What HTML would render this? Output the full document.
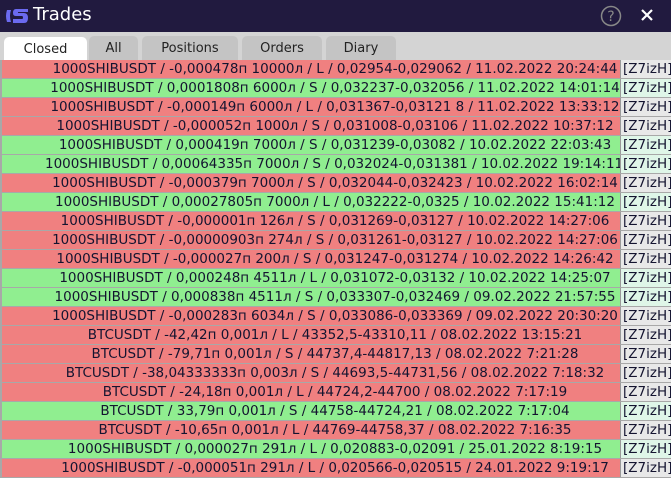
<!DOCTYPE html>
<html><head><meta charset="utf-8"><style>
*{margin:0;padding:0;box-sizing:border-box}
body{width:671px;height:478px;overflow:hidden;background:#d4d4d4;font-family:"DejaVu Sans","Liberation Sans",sans-serif}
.title{height:32px;background:#211a3f;color:#fff;position:relative}
.title .t{position:absolute;left:33px;top:4px;font-size:18px}
.tabs{height:28px;position:relative}
.tab{position:absolute;top:4px;height:24px;background:#c4c4c4;border-radius:5px 5px 0 0;font-size:13px;color:#222;text-align:center;line-height:25px}
.tab.a{background:#fff;top:5px;height:24px}
.rows{position:absolute;top:60px;left:0;width:671px;border-left:2px solid #a8a8a8}
.r{height:19px;display:flex;border-bottom:1px solid #a8a8a8;font-size:13.5px;line-height:19px;color:#141430;white-space:nowrap}
.m{width:618px;overflow:hidden;text-align:center;padding-left:48px}
.z{width:51px;padding-left:2px;border-left:1px solid #9a9a9a}
.R .m{background:#f08080}.R .z{background:#e8e8e8}
.G .m{background:#90ee90}.G .z{background:#dff6e8}
.m.L{text-align:left;padding-left:43px}
</style></head><body>
<div class="title">
<svg style="position:absolute;left:5px;top:7px" width="24" height="18" viewBox="0 0 24 18"><path d="M2 3 Q0 9 2 15 L6 15 Q4 9 6 3Z" fill="#6b6af0"/><path d="M23 2 L11 2 Q8 2 8 6 Q8 9 11 9 L17 9 Q18 9 18 11 Q18 12 17 12 L8 12 L8 16 L19 16 Q23 16 23 11 Q23 6 19 6 L13 6 L13 5 L23 5Z" fill="#6b6af0"/></svg>
<span class="t">Trades</span>
<svg style="position:absolute;left:600px;top:5px" width="22" height="22" viewBox="0 0 22 22"><circle cx="11" cy="11" r="9.5" fill="none" stroke="#888" stroke-width="1.5"/><text x="11" y="16" font-size="14" text-anchor="middle" fill="#888" font-family="DejaVu Sans">?</text></svg>
<svg style="position:absolute;left:640px;top:8px" width="14" height="14" viewBox="0 0 14 14"><path d="M2 2L12 12M12 2L2 12" stroke="#fff" stroke-width="2.2"/></svg>
</div>
<div class="tabs">
<div class="tab a" style="left:4px;width:83px">Closed</div>
<div class="tab" style="left:89px;width:49px">All</div>
<div class="tab" style="left:142px;width:96px">Positions</div>
<div class="tab" style="left:242px;width:80px">Orders</div>
<div class="tab" style="left:326px;width:70px">Diary</div>
</div>
<div class="rows">
<div class="r R"><div class="m">1000SHIBUSDT / -0,000478п 10000л / L / 0,02954-0,029062 / 11.02.2022 20:24:44</div><div class="z">[Z7izH]</div></div>
<div class="r G"><div class="m">1000SHIBUSDT / 0,0001808п 6000л / S / 0,032237-0,032056 / 11.02.2022 14:01:14</div><div class="z">[Z7izH]</div></div>
<div class="r R"><div class="m">1000SHIBUSDT / -0,000149п 6000л / L / 0,031367-0,03121 8 / 11.02.2022 13:33:12</div><div class="z">[Z7izH]</div></div>
<div class="r R"><div class="m">1000SHIBUSDT / -0,000052п 1000л / S / 0,031008-0,03106 / 11.02.2022 10:37:12</div><div class="z">[Z7izH]</div></div>
<div class="r G"><div class="m">1000SHIBUSDT / 0,000419п 7000л / S / 0,031239-0,03082 / 10.02.2022 22:03:43</div><div class="z">[Z7izH]</div></div>
<div class="r G"><div class="m L">1000SHIBUSDT / 0,00064335п 7000л / S / 0,032024-0,031381 / 10.02.2022 19:14:11</div><div class="z">[Z7izH]</div></div>
<div class="r R"><div class="m">1000SHIBUSDT / -0,000379п 7000л / S / 0,032044-0,032423 / 10.02.2022 16:02:14</div><div class="z">[Z7izH]</div></div>
<div class="r G"><div class="m">1000SHIBUSDT / 0,00027805п 7000л / L / 0,032222-0,0325 / 10.02.2022 15:41:12</div><div class="z">[Z7izH]</div></div>
<div class="r R"><div class="m">1000SHIBUSDT / -0,000001п 126л / S / 0,031269-0,03127 / 10.02.2022 14:27:06</div><div class="z">[Z7izH]</div></div>
<div class="r R"><div class="m">1000SHIBUSDT / -0,00000903п 274л / S / 0,031261-0,03127 / 10.02.2022 14:27:06</div><div class="z">[Z7izH]</div></div>
<div class="r R"><div class="m">1000SHIBUSDT / -0,000027п 200л / S / 0,031247-0,031274 / 10.02.2022 14:26:42</div><div class="z">[Z7izH]</div></div>
<div class="r G"><div class="m">1000SHIBUSDT / 0,000248п 4511л / L / 0,031072-0,03132 / 10.02.2022 14:25:07</div><div class="z">[Z7izH]</div></div>
<div class="r G"><div class="m">1000SHIBUSDT / 0,000838п 4511л / S / 0,033307-0,032469 / 09.02.2022 21:57:55</div><div class="z">[Z7izH]</div></div>
<div class="r R"><div class="m">1000SHIBUSDT / -0,000283п 6034л / S / 0,033086-0,033369 / 09.02.2022 20:30:20</div><div class="z">[Z7izH]</div></div>
<div class="r R"><div class="m">BTCUSDT / -42,42п 0,001л / L / 43352,5-43310,11 / 08.02.2022 13:15:21</div><div class="z">[Z7izH]</div></div>
<div class="r R"><div class="m">BTCUSDT / -79,71п 0,001л / S / 44737,4-44817,13 / 08.02.2022 7:21:28</div><div class="z">[Z7izH]</div></div>
<div class="r R"><div class="m">BTCUSDT / -38,04333333п 0,003л / S / 44693,5-44731,56 / 08.02.2022 7:18:32</div><div class="z">[Z7izH]</div></div>
<div class="r R"><div class="m">BTCUSDT / -24,18п 0,001л / L / 44724,2-44700 / 08.02.2022 7:17:19</div><div class="z">[Z7izH]</div></div>
<div class="r G"><div class="m">BTCUSDT / 33,79п 0,001л / S / 44758-44724,21 / 08.02.2022 7:17:04</div><div class="z">[Z7izH]</div></div>
<div class="r R"><div class="m">BTCUSDT / -10,65п 0,001л / L / 44769-44758,37 / 08.02.2022 7:16:35</div><div class="z">[Z7izH]</div></div>
<div class="r G"><div class="m">1000SHIBUSDT / 0,000027п 291л / L / 0,020883-0,02091 / 25.01.2022 8:19:15</div><div class="z">[Z7izH]</div></div>
<div class="r R"><div class="m">1000SHIBUSDT / -0,000051п 291л / L / 0,020566-0,020515 / 24.01.2022 9:19:17</div><div class="z">[Z7izH]</div></div>
</div>
</body></html>
